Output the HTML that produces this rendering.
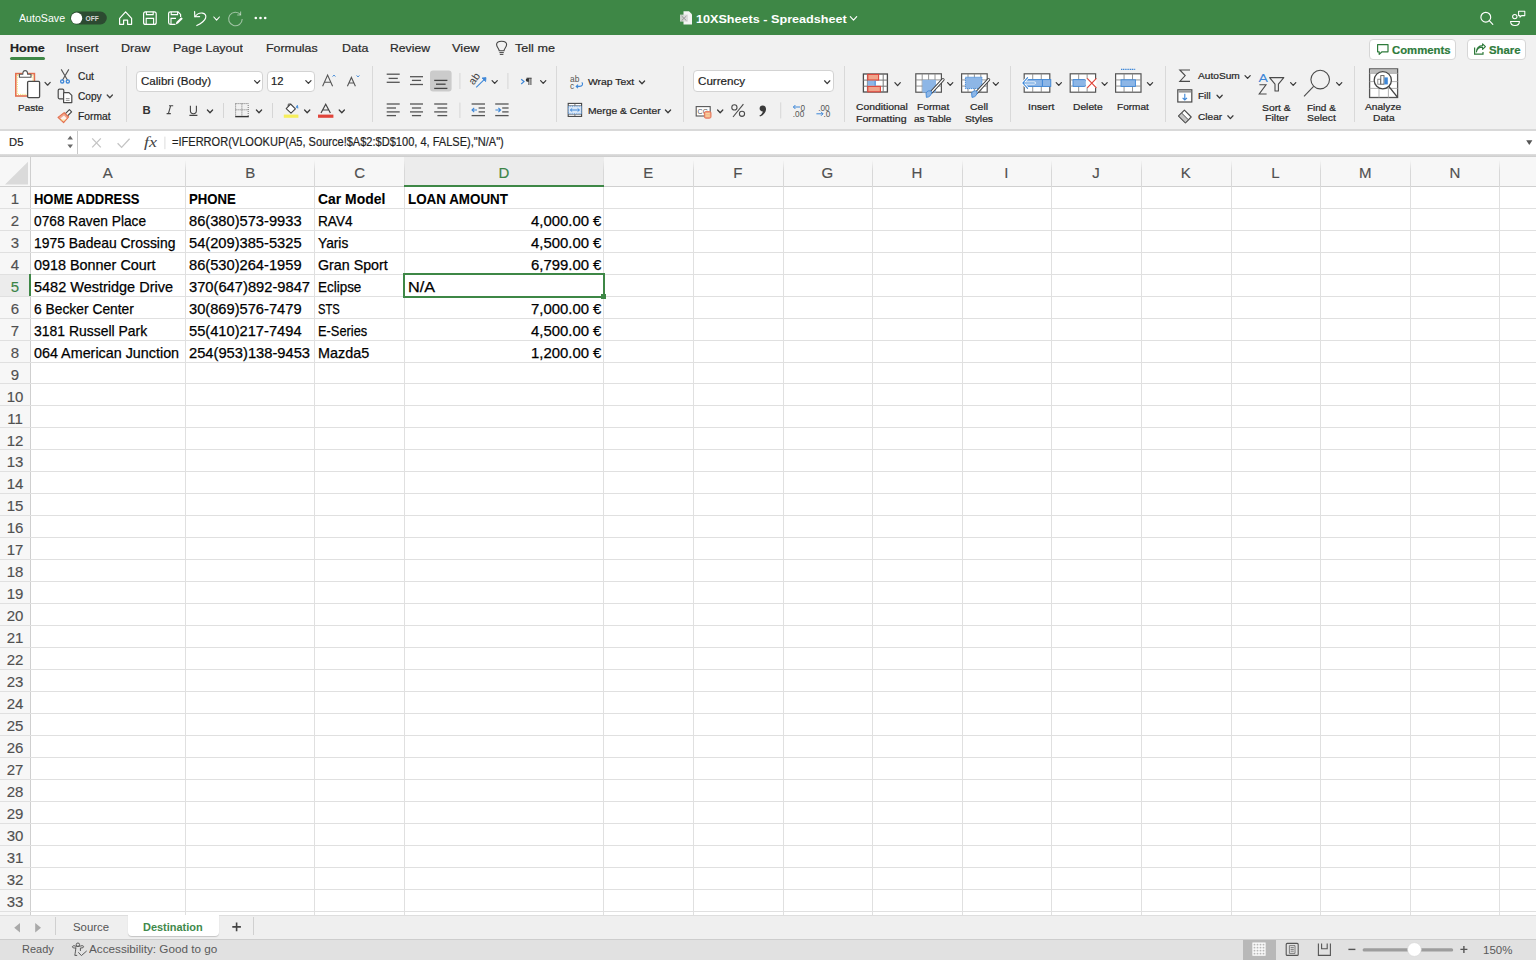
<!DOCTYPE html><html><head><meta charset='utf-8'><style>
*{box-sizing:border-box}
html,body{margin:0;padding:0}
body{width:1536px;height:960px;overflow:hidden;position:relative;background:#f1f1f1;font-family:'Liberation Sans',sans-serif}
.tx{position:absolute;white-space:pre;line-height:1;transform-origin:0 0}
.a{position:absolute}
svg{position:absolute;overflow:visible}
</style></head><body><div class="a" style="left:0px;top:0px;width:1536px;height:35px;background:#3e8746"></div><div class="a" style="left:0px;top:35px;width:1536px;height:94px;background:#f1f1f1"></div><div class="a" style="left:10px;top:57px;width:35px;height:3px;background:#3e8746;border-radius:2px"></div><div class="a" style="left:0px;top:129px;width:1536px;height:2px;background:#d9d9d9"></div><div class="a" style="left:1369px;top:39px;width:87px;height:21px;background:#fff;border:1px solid #d6d6d6;border-radius:4px"></div><div class="a" style="left:1467px;top:39px;width:59px;height:21px;background:#fff;border:1px solid #d6d6d6;border-radius:4px"></div><div class="a" style="left:126px;top:66px;width:1px;height:56px;background:#d9d9d9"></div><div class="a" style="left:372px;top:66px;width:1px;height:56px;background:#d9d9d9"></div><div class="a" style="left:556px;top:66px;width:1px;height:56px;background:#d9d9d9"></div><div class="a" style="left:683px;top:66px;width:1px;height:56px;background:#d9d9d9"></div><div class="a" style="left:844px;top:66px;width:1px;height:56px;background:#d9d9d9"></div><div class="a" style="left:1010px;top:66px;width:1px;height:56px;background:#d9d9d9"></div><div class="a" style="left:1165px;top:66px;width:1px;height:56px;background:#d9d9d9"></div><div class="a" style="left:1354px;top:66px;width:1px;height:56px;background:#d9d9d9"></div><div class="a" style="left:136px;top:71px;width:127px;height:21px;background:#fff;border:1px solid #d3d3d3;border-radius:4px"></div><div class="a" style="left:267px;top:71px;width:48px;height:21px;background:#fff;border:1px solid #d3d3d3;border-radius:4px"></div><div class="a" style="left:693px;top:70px;width:141px;height:22px;background:#fff;border:1px solid #d3d3d3;border-radius:4px"></div><div class="a" style="left:0px;top:131px;width:1536px;height:23px;background:#fff"></div><div class="a" style="left:77px;top:131px;width:1px;height:23px;background:#c9c9c9"></div><div class="a" style="left:0px;top:154px;width:1536px;height:3px;background:linear-gradient(#e0e0e0,#cccccc)"></div><div class="a" style="left:0px;top:157px;width:1536px;height:30px;background:#f7f7f7"></div><div class="a" style="left:404px;top:157px;width:200px;height:30px;background:#ececec"></div><div class="a" style="left:0px;top:186px;width:1536px;height:1px;background:#d0d0d0"></div><svg style="left:0px;top:157px;" width="30" height="30" viewBox="0 0 30 30"><path d="M5 27.6 L28 4.7 L28 27.6 Z" fill="#dadada"/></svg><div class="a" style="left:30px;top:157px;width:1px;height:758px;background:#cfcfcf"></div><div class="a" style="left:31px;top:187px;width:1505px;height:728px;background:#fff"></div><div class="a" style="left:0px;top:187px;width:30px;height:728px;background:#f7f7f7"></div><div class="a" style="left:0px;top:274px;width:30px;height:22px;background:#ececec"></div><div class="a" style="left:185px;top:160px;width:1px;height:27px;background:linear-gradient(rgba(216,216,216,0),#d8d8d8 40%)"></div><div class="a" style="left:185px;top:187px;width:1px;height:728px;background:#e0e0e0"></div><div class="a" style="left:314px;top:160px;width:1px;height:27px;background:linear-gradient(rgba(216,216,216,0),#d8d8d8 40%)"></div><div class="a" style="left:314px;top:187px;width:1px;height:728px;background:#e0e0e0"></div><div class="a" style="left:404px;top:160px;width:1px;height:27px;background:linear-gradient(rgba(216,216,216,0),#d8d8d8 40%)"></div><div class="a" style="left:404px;top:187px;width:1px;height:728px;background:#e0e0e0"></div><div class="a" style="left:603px;top:160px;width:1px;height:27px;background:linear-gradient(rgba(216,216,216,0),#d8d8d8 40%)"></div><div class="a" style="left:603px;top:187px;width:1px;height:728px;background:#e0e0e0"></div><div class="a" style="left:693px;top:160px;width:1px;height:27px;background:linear-gradient(rgba(216,216,216,0),#d8d8d8 40%)"></div><div class="a" style="left:693px;top:187px;width:1px;height:728px;background:#e0e0e0"></div><div class="a" style="left:783px;top:160px;width:1px;height:27px;background:linear-gradient(rgba(216,216,216,0),#d8d8d8 40%)"></div><div class="a" style="left:783px;top:187px;width:1px;height:728px;background:#e0e0e0"></div><div class="a" style="left:872px;top:160px;width:1px;height:27px;background:linear-gradient(rgba(216,216,216,0),#d8d8d8 40%)"></div><div class="a" style="left:872px;top:187px;width:1px;height:728px;background:#e0e0e0"></div><div class="a" style="left:962px;top:160px;width:1px;height:27px;background:linear-gradient(rgba(216,216,216,0),#d8d8d8 40%)"></div><div class="a" style="left:962px;top:187px;width:1px;height:728px;background:#e0e0e0"></div><div class="a" style="left:1051px;top:160px;width:1px;height:27px;background:linear-gradient(rgba(216,216,216,0),#d8d8d8 40%)"></div><div class="a" style="left:1051px;top:187px;width:1px;height:728px;background:#e0e0e0"></div><div class="a" style="left:1141px;top:160px;width:1px;height:27px;background:linear-gradient(rgba(216,216,216,0),#d8d8d8 40%)"></div><div class="a" style="left:1141px;top:187px;width:1px;height:728px;background:#e0e0e0"></div><div class="a" style="left:1231px;top:160px;width:1px;height:27px;background:linear-gradient(rgba(216,216,216,0),#d8d8d8 40%)"></div><div class="a" style="left:1231px;top:187px;width:1px;height:728px;background:#e0e0e0"></div><div class="a" style="left:1320px;top:160px;width:1px;height:27px;background:linear-gradient(rgba(216,216,216,0),#d8d8d8 40%)"></div><div class="a" style="left:1320px;top:187px;width:1px;height:728px;background:#e0e0e0"></div><div class="a" style="left:1410px;top:160px;width:1px;height:27px;background:linear-gradient(rgba(216,216,216,0),#d8d8d8 40%)"></div><div class="a" style="left:1410px;top:187px;width:1px;height:728px;background:#e0e0e0"></div><div class="a" style="left:1499px;top:160px;width:1px;height:27px;background:linear-gradient(rgba(216,216,216,0),#d8d8d8 40%)"></div><div class="a" style="left:1499px;top:187px;width:1px;height:728px;background:#e0e0e0"></div><div class="a" style="left:0px;top:208px;width:1536px;height:1px;background:#e0e0e0"></div><div class="a" style="left:0px;top:230px;width:1536px;height:1px;background:#e0e0e0"></div><div class="a" style="left:0px;top:252px;width:1536px;height:1px;background:#e0e0e0"></div><div class="a" style="left:0px;top:274px;width:1536px;height:1px;background:#e0e0e0"></div><div class="a" style="left:0px;top:296px;width:1536px;height:1px;background:#e0e0e0"></div><div class="a" style="left:0px;top:318px;width:1536px;height:1px;background:#e0e0e0"></div><div class="a" style="left:0px;top:340px;width:1536px;height:1px;background:#e0e0e0"></div><div class="a" style="left:0px;top:362px;width:1536px;height:1px;background:#e0e0e0"></div><div class="a" style="left:0px;top:383px;width:1536px;height:1px;background:#e0e0e0"></div><div class="a" style="left:0px;top:405px;width:1536px;height:1px;background:#e0e0e0"></div><div class="a" style="left:0px;top:427px;width:1536px;height:1px;background:#e0e0e0"></div><div class="a" style="left:0px;top:449px;width:1536px;height:1px;background:#e0e0e0"></div><div class="a" style="left:0px;top:471px;width:1536px;height:1px;background:#e0e0e0"></div><div class="a" style="left:0px;top:493px;width:1536px;height:1px;background:#e0e0e0"></div><div class="a" style="left:0px;top:515px;width:1536px;height:1px;background:#e0e0e0"></div><div class="a" style="left:0px;top:537px;width:1536px;height:1px;background:#e0e0e0"></div><div class="a" style="left:0px;top:559px;width:1536px;height:1px;background:#e0e0e0"></div><div class="a" style="left:0px;top:581px;width:1536px;height:1px;background:#e0e0e0"></div><div class="a" style="left:0px;top:603px;width:1536px;height:1px;background:#e0e0e0"></div><div class="a" style="left:0px;top:625px;width:1536px;height:1px;background:#e0e0e0"></div><div class="a" style="left:0px;top:647px;width:1536px;height:1px;background:#e0e0e0"></div><div class="a" style="left:0px;top:669px;width:1536px;height:1px;background:#e0e0e0"></div><div class="a" style="left:0px;top:691px;width:1536px;height:1px;background:#e0e0e0"></div><div class="a" style="left:0px;top:713px;width:1536px;height:1px;background:#e0e0e0"></div><div class="a" style="left:0px;top:735px;width:1536px;height:1px;background:#e0e0e0"></div><div class="a" style="left:0px;top:757px;width:1536px;height:1px;background:#e0e0e0"></div><div class="a" style="left:0px;top:779px;width:1536px;height:1px;background:#e0e0e0"></div><div class="a" style="left:0px;top:801px;width:1536px;height:1px;background:#e0e0e0"></div><div class="a" style="left:0px;top:823px;width:1536px;height:1px;background:#e0e0e0"></div><div class="a" style="left:0px;top:845px;width:1536px;height:1px;background:#e0e0e0"></div><div class="a" style="left:0px;top:867px;width:1536px;height:1px;background:#e0e0e0"></div><div class="a" style="left:0px;top:889px;width:1536px;height:1px;background:#e0e0e0"></div><div class="a" style="left:0px;top:911px;width:1536px;height:1px;background:#e0e0e0"></div><div class="a" style="left:404px;top:185px;width:200px;height:2px;background:#3e8746"></div><div class="a" style="left:29px;top:274px;width:2px;height:22px;background:#3e8746"></div><div class="a" style="left:403px;top:273px;width:202px;height:25px;border:2px solid #3e8746"></div><div class="a" style="left:601px;top:294px;width:5px;height:5px;background:#3e8746"></div><div class="a" style="left:0px;top:915px;width:1536px;height:24px;background:#efefef"></div><div class="a" style="left:0px;top:915px;width:1536px;height:1px;background:#dedede"></div><div class="a" style="left:55px;top:917px;width:1px;height:18px;background:#d0d0d0"></div><div class="a" style="left:253px;top:917px;width:1px;height:18px;background:#d0d0d0"></div><div class="a" style="left:128px;top:915px;width:91px;height:21px;background:#fff;border-radius:0 0 4px 4px;box-shadow:0 1px 1px rgba(0,0,0,.18)"></div><div class="a" style="left:0px;top:939px;width:1536px;height:21px;background:#e1e1e1"></div><div class="a" style="left:0px;top:939px;width:1536px;height:1px;background:#cdcdcd"></div><div class="a" style="left:1243px;top:940px;width:33px;height:20px;background:#b8b8b8"></div><svg style="left:0;top:0" width="1536" height="960" viewBox="0 0 1536 960"><rect x="70.3" y="11.5" width="36.5" height="13" rx="6.5" fill="#2c4a31"/><circle cx="76.6" cy="18.2" r="5.6" fill="#fff"/><text x="85.6" y="21.1" font-family="Liberation Sans" font-weight="700" font-size="7.2" fill="#d8d8d8" textLength="13.2" lengthAdjust="spacingAndGlyphs">OFF</text><path d="M119.6 18.3 L125.6 11.8 L131.6 18.3 V24.3 H127.6 V20.2 H123.6 V24.3 H119.6 Z" fill="none" stroke="#ffffff" stroke-width="1.2" stroke-linejoin="round"/><rect x="143.6" y="11.8" width="12.6" height="12.6" rx="2" fill="none" stroke="#ffffff" stroke-width="1.2"/><path d="M146.4 11.8 V14.6 H153.2 V11.8 M146.2 24.4 V18.4 H153.6 V24.4" fill="none" stroke="#ffffff" stroke-width="1.1"/><path d="M175.5 24.4 H170.4 Q168.6 24.4 168.6 22.6 V13.6 Q168.6 11.8 170.4 11.8 H178 L180.6 14.4 V17" fill="none" stroke="#ffffff" stroke-width="1.2"/><path d="M171.2 11.8 V14.6 H177.6 V11.8 M171 24.4 V18.4 H176" fill="none" stroke="#ffffff" stroke-width="1.1"/><path d="M175.8 24.6 L176.4 22 L181.2 17.2 L182.8 18.8 L178 23.6 Z" fill="#ffffff"/><path d="M195 16.6 C199 11.2 207.4 12.2 205.6 18 C204.6 21.2 200.8 23.6 196.8 25.6" fill="none" stroke="#ffffff" stroke-width="1.15" stroke-linecap="round"/><path d="M194.6 11.6 L194.8 16.8 L199.6 16.6" fill="none" stroke="#ffffff" stroke-width="1.15" stroke-linecap="round" stroke-linejoin="round"/><path d="M213.80 17.00 L216.60 20.20 L219.40 17.00" fill="none" stroke="#ffffff" stroke-width="1.1" stroke-linecap="round" stroke-linejoin="round"/><path d="M240.6 14.6 A6.8 6.8 0 1 0 242.2 19" fill="none" stroke="rgba(255,255,255,0.5)" stroke-width="1.1"/><path d="M240.6 11.4 V15 H237.2" fill="none" stroke="rgba(255,255,255,0.5)" stroke-width="1.1"/><circle cx="255.8" cy="18" r="1.3" fill="#ffffff"/><circle cx="260.5" cy="18" r="1.3" fill="#ffffff"/><circle cx="265.2" cy="18" r="1.3" fill="#ffffff"/><path d="M683.5 11.2 H689 L692 14.2 V24.6 H683.5 Z" fill="#f4f4f4"/><rect x="680" y="14.6" width="8" height="7" fill="#d9d9d9" opacity="0.9"/><path d="M681.6 16 L686.4 20.6 M686.4 16 L681.6 20.6" stroke="#9a9a9a" stroke-width="1"/><path d="M850.30 16.70 L853.50 20.10 L856.70 16.70" fill="none" stroke="#ffffff" stroke-width="1.2" stroke-linecap="round" stroke-linejoin="round"/><circle cx="1485.8" cy="17.2" r="4.9" fill="none" stroke="#ffffff" stroke-width="1.15"/><path d="M1489.3 20.7 L1492.8 24.4" stroke="#ffffff" stroke-width="1.2" stroke-linecap="round"/><circle cx="1514.8" cy="16.6" r="2.2" fill="none" stroke="#ffffff" stroke-width="1.05"/><path d="M1510.6 21.4 H1519.4 C1519.4 24 1517.6 25.4 1515 25.4 C1512.4 25.4 1510.6 24 1510.6 21.4 Z" fill="none" stroke="#ffffff" stroke-width="1.05"/><path d="M1518.6 11.2 H1524.8 V15.6 H1521.6 L1520 17.2 V15.6 H1518.6 Z" fill="none" stroke="#ffffff" stroke-width="1.05" stroke-linejoin="round"/><path d="M499.2 50.8 C499.2 48.4 496.6 47.4 496.6 44.6 C496.6 42.4 498.6 41.2 501.6 41.2 C504.6 41.2 506.6 42.4 506.6 44.6 C506.6 47.4 504 48.4 504 50.8 Z" fill="none" stroke="#444" stroke-width="1.1"/><path d="M499.4 52.6 H503.8 M499.8 54.4 H503.4" stroke="#444" stroke-width="1"/><path d="M1377.6 44.6 H1388 V51.8 H1382 L1379.2 54.4 V51.8 H1377.6 Z" fill="none" stroke="#2e7b3b" stroke-width="1.2" stroke-linejoin="round"/><path d="M1474.6 47.6 V54.2 H1483 V52" fill="none" stroke="#2e7b3b" stroke-width="1.2"/><path d="M1476.4 52 C1477 48.4 1479.6 47.2 1482.6 47.2 V49.4 L1485.4 46.6 L1482.6 43.8 V45.6 C1479 45.8 1476.6 48.2 1476.4 52 Z" fill="none" stroke="#2e7b3b" stroke-width="1.1" stroke-linejoin="round"/><rect x="15.8" y="73.6" width="18.6" height="22.4" fill="#fff" stroke="#e4704f" stroke-width="1.6"/><rect x="17.4" y="75.2" width="15.4" height="19.2" fill="none" stroke="#f3e14a" stroke-width="0.9" stroke-dasharray="1 1.2"/><path d="M19.4 77.2 V74.2 H22.8 C22.8 71.8 23.8 70.6 25.2 70.6 C26.6 70.6 27.6 71.8 27.6 74.2 H31 V77.2 Z" fill="#fff" stroke="#555" stroke-width="1.1" stroke-linejoin="round"/><rect x="27.6" y="81.4" width="12" height="16.2" rx="1" fill="#fff" stroke="#4a4a4a" stroke-width="1.3"/><path d="M45.00 82.40 L47.60 85.20 L50.20 82.40" fill="none" stroke="#454545" stroke-width="1.25" stroke-linecap="round" stroke-linejoin="round"/><path d="M61.2 69.4 L67.6 80.2 M68.8 69.4 L62.4 80.2" stroke="#555" stroke-width="1.1"/><circle cx="62.2" cy="81.4" r="1.6" fill="none" stroke="#3d87d8" stroke-width="1.3"/><circle cx="67.8" cy="81.4" r="1.6" fill="none" stroke="#3d87d8" stroke-width="1.3"/><path d="M64.4 98.8 H59.4 Q58.2 98.8 58.2 97.6 V90.4 Q58.2 89.2 59.4 89.2 H62.6 Q63.8 89.2 63.8 90.4 V92" fill="none" stroke="#4a4a4a" stroke-width="1.2"/><path d="M63.6 92.6 H69 L71.8 95.4 V102.6 H63.6 Z" fill="#fff" stroke="#4a4a4a" stroke-width="1.2" stroke-linejoin="round"/><path d="M65.8 98.6 H69.6 M65.8 100.4 H69.6" stroke="#777" stroke-width="0.8"/><path d="M107.20 95.00 L109.80 97.80 L112.40 95.00" fill="none" stroke="#454545" stroke-width="1.25" stroke-linecap="round" stroke-linejoin="round"/><path d="M65.2 113.8 L69.4 109.6 L71.6 111.8 L67.4 116" fill="#fff" stroke="#4a4a4a" stroke-width="1.2" stroke-linejoin="round"/><path d="M58 117.4 L64.2 112.6 L68.6 117 L63.6 122.6 Z" fill="#f0a48a" stroke="#e4704f" stroke-width="1.1" stroke-linejoin="round"/><path d="M60.4 118.4 L64 115.6 L66.6 118.2 L63.6 121.2 Z" fill="#fff" opacity="0.85"/><path d="M61.4 120 H65.6" stroke="#f3e14a" stroke-width="1" stroke-dasharray="1 1"/><path d="M254.60 80.60 L257.20 83.40 L259.80 80.60" fill="none" stroke="#3a3a3a" stroke-width="1.25" stroke-linecap="round" stroke-linejoin="round"/><path d="M305.80 80.60 L308.40 83.40 L311.00 80.60" fill="none" stroke="#3a3a3a" stroke-width="1.25" stroke-linecap="round" stroke-linejoin="round"/><path d="M322.6 86.2 L327.6 75 L332.6 86.2 M324.4 82.2 H330.8" fill="none" stroke="#555" stroke-width="1.1"/><path d="M332.6 76.6 L334 75 L335.4 76.6" fill="none" stroke="#3d87d8" stroke-width="0.9"/><path d="M347.4 86.2 L351.4 77.4 L355.4 86.2 M348.8 83 H354" fill="none" stroke="#555" stroke-width="1.1"/><path d="M356.6 75.4 L358 77 L359.4 75.4" fill="none" stroke="#3d87d8" stroke-width="0.9"/><text x="142.6" y="113.8" font-family="Liberation Sans" font-weight="700" font-size="11.4" fill="#333">B</text><path d="M170.6 105.8 L168.4 113.6 M169 105.8 H173.2 M166.6 113.6 H170.8" stroke="#444" stroke-width="1.1"/><path d="M190.4 105.8 V110.6 C190.4 112.8 191.6 113.8 193.4 113.8 C195.2 113.8 196.4 112.8 196.4 110.6 V105.8 M189.4 115.4 H197.4" fill="none" stroke="#444" stroke-width="1.1"/><path d="M207.40 110.00 L210.00 112.80 L212.60 110.00" fill="none" stroke="#3a3a3a" stroke-width="1.25" stroke-linecap="round" stroke-linejoin="round"/><rect x="223" y="103" width="1" height="15" fill="#d6d6d6"/><path d="M235.6 103.6 H248.2 V116 M235.6 103.6 V116 M241.9 103.6 V116 M235.6 109.8 H248.2" fill="none" stroke="#666" stroke-width="0.9" stroke-dasharray="1 1"/><path d="M235.2 116.6 H248.8" stroke="#333" stroke-width="1.4"/><path d="M256.40 110.00 L259.00 112.80 L261.60 110.00" fill="none" stroke="#3a3a3a" stroke-width="1.25" stroke-linecap="round" stroke-linejoin="round"/><rect x="272" y="103" width="1" height="15" fill="#d6d6d6"/><path d="M286.2 108.6 L290.6 104 L295.4 108.8 L291 113.2 Z" fill="#fff" stroke="#444" stroke-width="1.1" stroke-linejoin="round"/><path d="M288.4 106.2 C287.6 104.6 288.6 103.4 289.6 103.8" fill="none" stroke="#444" stroke-width="1"/><path d="M296 107.4 L297.4 105.2 L298 108.4" fill="#3d87d8" stroke="#3d87d8" stroke-width="0.7"/><rect x="283.8" y="114.6" width="14.6" height="3.2" fill="#f6ee5a"/><path d="M304.60 110.00 L307.20 112.80 L309.80 110.00" fill="none" stroke="#3a3a3a" stroke-width="1.25" stroke-linecap="round" stroke-linejoin="round"/><path d="M321 113 L325.7 104.2 L330.4 113 M322.7 110 H328.7" fill="none" stroke="#444" stroke-width="1.2"/><rect x="318" y="114.6" width="15.4" height="3.2" fill="#e0453b"/><path d="M339.20 110.00 L341.80 112.80 L344.40 110.00" fill="none" stroke="#3a3a3a" stroke-width="1.25" stroke-linecap="round" stroke-linejoin="round"/><path d="M386.7 74.2 H399.7" stroke="#555" stroke-width="1.3"/><path d="M388.6 78.4 H397.8" stroke="#555" stroke-width="1.3"/><path d="M386.7 82.3 H399.7" stroke="#555" stroke-width="1.3"/><path d="M410 76.7 H423" stroke="#555" stroke-width="1.3"/><path d="M411.9 80.4 H421.1" stroke="#555" stroke-width="1.3"/><path d="M410 84.5 H423" stroke="#555" stroke-width="1.3"/><rect x="430" y="70.6" width="21.6" height="21" rx="3" fill="#cbcbcb"/><path d="M434.2 80.4 H447.4" stroke="#444" stroke-width="1.3"/><path d="M436 84.2 H445.6" stroke="#444" stroke-width="1.3"/><path d="M434.2 88.4 H447.4" stroke="#444" stroke-width="1.3"/><rect x="459.4" y="73" width="1" height="16" fill="#d6d6d6"/><text x="0" y="0" font-family="Liberation Sans" font-size="10.6" fill="#444" transform="translate(473.8 85.6) rotate(-55)">ab</text><path d="M476.2 87.4 L485.2 78.6" fill="none" stroke="#3d87d8" stroke-width="1.1"/><path d="M482 78 L486 77.6 L485.6 81.6 Z" fill="#3d87d8" stroke="#3d87d8" stroke-width="0.8" stroke-linejoin="round"/><path d="M492.10 80.60 L494.70 83.40 L497.30 80.60" fill="none" stroke="#3a3a3a" stroke-width="1.25" stroke-linecap="round" stroke-linejoin="round"/><rect x="507.4" y="73" width="1" height="16" fill="#d6d6d6"/><path d="M521.2 79.2 L524 81.6 L521.2 84" fill="none" stroke="#3d87d8" stroke-width="1.2"/><path d="M528.9 78.2 V85 M530.9 78.2 V85 M526.6 78.2 H531.6" fill="none" stroke="#333" stroke-width="0.9"/><path d="M528.9 78.2 H527.8 C526.6 78.2 525.8 79 525.8 80 C525.8 81 526.6 81.8 527.8 81.8 H528.9 Z" fill="#333"/><path d="M540.60 80.60 L543.20 83.40 L545.80 80.60" fill="none" stroke="#3a3a3a" stroke-width="1.25" stroke-linecap="round" stroke-linejoin="round"/><path d="M386.7 104 H399.7" stroke="#555" stroke-width="1.3"/><path d="M386.7 108 H396" stroke="#555" stroke-width="1.3"/><path d="M386.7 111.9 H399.7" stroke="#555" stroke-width="1.3"/><path d="M386.7 115.6 H396" stroke="#555" stroke-width="1.3"/><path d="M410 104 H423" stroke="#555" stroke-width="1.3"/><path d="M411.9 108 H421.1" stroke="#555" stroke-width="1.3"/><path d="M410 111.9 H423" stroke="#555" stroke-width="1.3"/><path d="M411.9 115.6 H421.1" stroke="#555" stroke-width="1.3"/><path d="M434.2 104 H447.2" stroke="#555" stroke-width="1.3"/><path d="M437.4 108 H447.2" stroke="#555" stroke-width="1.3"/><path d="M434.2 111.9 H447.2" stroke="#555" stroke-width="1.3"/><path d="M437.4 115.6 H447.2" stroke="#555" stroke-width="1.3"/><rect x="459.4" y="102.6" width="1" height="15.4" fill="#d6d6d6"/><path d="M471.6 104 H485" stroke="#555" stroke-width="1.3"/><path d="M478.6 108 H485" stroke="#555" stroke-width="1.3"/><path d="M478.6 111.9 H485" stroke="#555" stroke-width="1.3"/><path d="M471.6 115.6 H485" stroke="#555" stroke-width="1.3"/><path d="M477 110 H472 M474.2 107.8 L472 110 L474.2 112.2" fill="none" stroke="#3d87d8" stroke-width="1.1"/><path d="M495.2 104 H508.6" stroke="#555" stroke-width="1.3"/><path d="M502.2 108 H508.6" stroke="#555" stroke-width="1.3"/><path d="M502.2 111.9 H508.6" stroke="#555" stroke-width="1.3"/><path d="M495.2 115.6 H508.6" stroke="#555" stroke-width="1.3"/><path d="M495.4 110 H500.6 M498.4 107.8 L500.6 110 L498.4 112.2" fill="none" stroke="#3d87d8" stroke-width="1.1"/><text x="570" y="82" font-family="Liberation Sans" font-size="8.4" fill="#555">ab</text><text x="570" y="88.6" font-family="Liberation Sans" font-size="8.4" fill="#555">c</text><path d="M581.8 82.4 C583.4 84 582.4 86.4 579.6 86.4 H576.2 M578 84.6 L576.2 86.4 L578 88.2" fill="none" stroke="#3d87d8" stroke-width="1.1"/><path d="M639.40 81.00 L642.00 83.80 L644.60 81.00" fill="none" stroke="#3a3a3a" stroke-width="1.25" stroke-linecap="round" stroke-linejoin="round"/><rect x="568.2" y="103.4" width="13.4" height="13" fill="#fff" stroke="#444" stroke-width="1.1"/><path d="M574.9 103.4 V105.6 M574.9 114.4 V116.4 M568.2 105.8 H581.6 M568.2 114.2 H581.6" stroke="#555" stroke-width="0.8"/><rect x="568.4" y="106.2" width="13" height="7.6" fill="#dbe8f7" stroke="#3d87d8" stroke-width="0.8" stroke-dasharray="1 0.8"/><path d="M570.4 110 H579.4 M572.2 108.4 L570.4 110 L572.2 111.6 M577.6 108.4 L579.4 110 L577.6 111.6" fill="none" stroke="#3d87d8" stroke-width="1"/><path d="M665.40 110.00 L668.00 112.80 L670.60 110.00" fill="none" stroke="#3a3a3a" stroke-width="1.25" stroke-linecap="round" stroke-linejoin="round"/><path d="M824.60 80.80 L827.20 83.60 L829.80 80.80" fill="none" stroke="#3a3a3a" stroke-width="1.25" stroke-linecap="round" stroke-linejoin="round"/><rect x="696.2" y="106.6" width="14" height="9.4" fill="#fff" stroke="#555" stroke-width="1.1"/><text x="697.6" y="114.2" font-family="Liberation Sans" font-size="7" fill="#555">CC</text><rect x="704.4" y="111.6" width="6.6" height="6.6" rx="1.4" fill="#f0a48a" stroke="#e4704f" stroke-width="0.9"/><path d="M705.6 113.8 H709.8 M705.6 116 H709.8" stroke="#fff4a0" stroke-width="0.9"/><path d="M717.60 110.00 L720.20 112.80 L722.80 110.00" fill="none" stroke="#3a3a3a" stroke-width="1.25" stroke-linecap="round" stroke-linejoin="round"/><circle cx="734.4" cy="107.4" r="2.6" fill="none" stroke="#4a4a4a" stroke-width="1.1"/><circle cx="742" cy="113.8" r="2.6" fill="none" stroke="#4a4a4a" stroke-width="1.1"/><path d="M743.4 104.2 L733 117" stroke="#4a4a4a" stroke-width="1.1"/><path d="M762.6 105.4 C765.2 105.4 766.2 107.4 766 109.6 C765.8 112.6 763.6 115 760 116.4 L759.4 115.6 C761.8 114.2 762.6 112.8 762.8 111.4 C761 111.2 759.6 110.2 759.6 108.4 C759.6 106.6 760.8 105.4 762.6 105.4 Z" fill="#3a3a3a"/><rect x="780.2" y="102.4" width="1" height="16" fill="#d6d6d6"/><text x="800.4" y="110.6" font-family="Liberation Sans" font-size="8.2" fill="#555">0</text><text x="792.8" y="117.4" font-family="Liberation Sans" font-size="8.2" fill="#555">.00</text><path d="M800 107 H793.4 M795.4 105 L793.4 107 L795.4 109" fill="none" stroke="#3d87d8" stroke-width="1"/><text x="818.2" y="110.6" font-family="Liberation Sans" font-size="8.2" fill="#555">.00</text><text x="823.6" y="117.4" font-family="Liberation Sans" font-size="8.2" fill="#555">.0</text><path d="M816.4 113.8 H823 M821 111.8 L823 113.8 L821 115.8" fill="none" stroke="#3d87d8" stroke-width="1"/><rect x="863.4" y="74" width="24" height="18" fill="#fff" stroke="#4a4a4a" stroke-width="1.3"/><path d="M867.4 74 V92 M883.2 74 V92 M863.4 80.1 H887.4 M863.4 86.2 H887.4" stroke="#777" stroke-width="1"/><rect x="867.8" y="74.4" width="10.8" height="5.6" fill="#f0a48a" stroke="#e0453b" stroke-width="1.1"/><rect x="867.6" y="80.8" width="7.8" height="5" fill="#8db6e6"/><path d="M875.2 80.8 V85.8" stroke="#3d87d8" stroke-width="1"/><rect x="867.8" y="86.4" width="12.6" height="5.4" fill="#f0a48a" stroke="#e0453b" stroke-width="1.1"/><path d="M894.90 82.70 L897.60 85.70 L900.30 82.70" fill="none" stroke="#3a3a3a" stroke-width="1.25" stroke-linecap="round" stroke-linejoin="round"/><rect x="915.8" y="73.8" width="25.600000000000023" height="18.400000000000006" fill="#fff" stroke="#555" stroke-width="1.2"/><path d="M922.20 73.8 V92.2" stroke="#888" stroke-width="0.9"/><path d="M928.60 73.8 V92.2" stroke="#888" stroke-width="0.9"/><path d="M935.00 73.8 V92.2" stroke="#888" stroke-width="0.9"/><path d="M915.8 79.93 H941.4" stroke="#888" stroke-width="0.9"/><path d="M915.8 86.07 H941.4" stroke="#888" stroke-width="0.9"/><rect x="922.4" y="79.8" width="13.6" height="12.8" fill="#8db6e6"/><path d="M943 79.6 L931.2 92.4" stroke="#444" stroke-width="3.2" stroke-linecap="round"/><path d="M943 79.6 L931.2 92.4" stroke="#fff" stroke-width="1.4" stroke-linecap="round"/><path d="M926 93 C927.4 90.6 929.6 90.2 931.6 91.6 C931.8 94.6 929.8 97.2 926.4 97.4 Z" fill="#8db6e6" stroke="#3d87d8" stroke-width="0.9"/><path d="M947.60 82.60 L950.20 85.40 L952.80 82.60" fill="none" stroke="#3a3a3a" stroke-width="1.25" stroke-linecap="round" stroke-linejoin="round"/><rect x="961.6" y="73.8" width="25.600000000000023" height="18.400000000000006" fill="#fff" stroke="#555" stroke-width="1.2"/><path d="M968.00 73.8 V92.2" stroke="#888" stroke-width="0.9"/><path d="M974.40 73.8 V92.2" stroke="#888" stroke-width="0.9"/><path d="M980.80 73.8 V92.2" stroke="#888" stroke-width="0.9"/><path d="M961.6 79.93 H987.2" stroke="#888" stroke-width="0.9"/><path d="M961.6 86.07 H987.2" stroke="#888" stroke-width="0.9"/><rect x="965.4" y="77.2" width="16.6" height="11.4" fill="#8db6e6" stroke="#3d87d8" stroke-width="0.9" stroke-dasharray="1.2 0.8"/><path d="M988.6 79.6 L976.8 92.4" stroke="#444" stroke-width="3.2" stroke-linecap="round"/><path d="M988.6 79.6 L976.8 92.4" stroke="#fff" stroke-width="1.4" stroke-linecap="round"/><path d="M971.6 93 C973 90.6 975.2 90.2 977.2 91.6 C977.4 94.6 975.4 97.2 972 97.4 Z" fill="#8db6e6" stroke="#3d87d8" stroke-width="0.9"/><path d="M993.20 82.60 L995.80 85.40 L998.40 82.60" fill="none" stroke="#3a3a3a" stroke-width="1.25" stroke-linecap="round" stroke-linejoin="round"/><rect x="1024.2" y="73.8" width="25.59999999999991" height="18.400000000000006" fill="#fff" stroke="#555" stroke-width="1.2"/><path d="M1032.73 73.8 V92.2" stroke="#888" stroke-width="0.9"/><path d="M1041.27 73.8 V92.2" stroke="#888" stroke-width="0.9"/><path d="M1024.2 79.93 H1049.8" stroke="#888" stroke-width="0.9"/><path d="M1024.2 86.07 H1049.8" stroke="#888" stroke-width="0.9"/><rect x="1026" y="79.6" width="24.8" height="6.8" fill="#8db6e6" stroke="#3d87d8" stroke-width="0.9"/><path d="M1034.4 83 H1023 M1027.6 77.6 L1022.8 83 L1027.6 88.4" fill="none" stroke="#fff" stroke-width="2.8" stroke-linecap="round" stroke-linejoin="round"/><path d="M1034.4 83 H1023 M1027.6 77.6 L1022.8 83 L1027.6 88.4" fill="none" stroke="#3d87d8" stroke-width="1.1" stroke-linecap="round" stroke-linejoin="round"/><path d="M1042.4 79.8 V86.2" stroke="#3d87d8" stroke-width="1"/><path d="M1056.20 82.60 L1058.80 85.40 L1061.40 82.60" fill="none" stroke="#3a3a3a" stroke-width="1.25" stroke-linecap="round" stroke-linejoin="round"/><rect x="1070.2" y="73.8" width="25.399999999999864" height="18.400000000000006" fill="#fff" stroke="#555" stroke-width="1.2"/><path d="M1078.67 73.8 V92.2" stroke="#888" stroke-width="0.9"/><path d="M1087.13 73.8 V92.2" stroke="#888" stroke-width="0.9"/><path d="M1070.2 79.93 H1095.6" stroke="#888" stroke-width="0.9"/><path d="M1070.2 86.07 H1095.6" stroke="#888" stroke-width="0.9"/><path d="M1073 79.6 H1084.6 L1087.8 83 L1084.6 86.4 H1073 Z" fill="#8db6e6" stroke="#3d87d8" stroke-width="0.9"/><rect x="1085.8" y="79" width="11" height="8.6" fill="#fff"/><path d="M1087.2 78.4 L1096.4 87.8 M1096.4 78.4 L1087.2 87.8" stroke="#e0453b" stroke-width="1.2"/><path d="M1102.00 82.60 L1104.60 85.40 L1107.20 82.60" fill="none" stroke="#3a3a3a" stroke-width="1.25" stroke-linecap="round" stroke-linejoin="round"/><rect x="1115.6" y="73.8" width="25.40000000000009" height="18.400000000000006" fill="#fff" stroke="#555" stroke-width="1.2"/><path d="M1124.07 73.8 V92.2" stroke="#888" stroke-width="0.9"/><path d="M1132.53 73.8 V92.2" stroke="#888" stroke-width="0.9"/><path d="M1115.6 79.93 H1141" stroke="#888" stroke-width="0.9"/><path d="M1115.6 86.07 H1141" stroke="#888" stroke-width="0.9"/><rect x="1121" y="79.8" width="14.4" height="6.6" fill="#8db6e6" stroke="#3d87d8" stroke-width="0.9"/><path d="M1121 69.4 H1135.6" stroke="#3d87d8" stroke-width="1.4" stroke-dasharray="1.2 0.6"/><path d="M1147.40 82.60 L1150.00 85.40 L1152.60 82.60" fill="none" stroke="#3a3a3a" stroke-width="1.25" stroke-linecap="round" stroke-linejoin="round"/><path d="M1190 70 H1179.8 L1185.2 75.6 L1179.8 81.4 H1190" fill="none" stroke="#4a4a4a" stroke-width="1.1" stroke-linejoin="miter"/><path d="M1245.00 75.60 L1247.60 78.40 L1250.20 75.60" fill="none" stroke="#3a3a3a" stroke-width="1.25" stroke-linecap="round" stroke-linejoin="round"/><rect x="1177.8" y="89.8" width="14" height="12.2" fill="#fff" stroke="#4a4a4a" stroke-width="1.2"/><rect x="1178.4" y="90.4" width="12.8" height="2.2" fill="#999"/><path d="M1184.8 93.8 V100 M1182.6 97.8 L1184.8 100 L1187 97.8" fill="none" stroke="#3d87d8" stroke-width="1.1"/><path d="M1217.00 95.20 L1219.60 98.00 L1222.20 95.20" fill="none" stroke="#3a3a3a" stroke-width="1.25" stroke-linecap="round" stroke-linejoin="round"/><path d="M1178.6 116 L1184.4 110.2 L1191.2 117 L1185.4 122.8 Z" fill="#fff" stroke="#4a4a4a" stroke-width="1.1" stroke-linejoin="round"/><path d="M1178.6 116 L1181.6 113 L1188.4 119.8 L1185.4 122.8 Z" fill="#c4c4c4" stroke="#555" stroke-width="1" stroke-linejoin="round"/><path d="M1227.80 115.80 L1230.40 118.60 L1233.00 115.80" fill="none" stroke="#3a3a3a" stroke-width="1.25" stroke-linecap="round" stroke-linejoin="round"/><text x="1258.4" y="81.6" font-family="Liberation Sans" font-size="11.6" fill="#3d87d8" textLength="9.4" lengthAdjust="spacingAndGlyphs">A</text><path d="M1259.4 84.8 H1266 L1259.2 94 H1266.6" fill="none" stroke="#4a4a4a" stroke-width="1.1"/><path d="M1269.6 77.6 H1283.8 L1278.4 84.2 V91 H1275 V84.2 Z" fill="none" stroke="#4a4a4a" stroke-width="1.1" stroke-linejoin="round"/><path d="M1290.60 82.60 L1293.20 85.40 L1295.80 82.60" fill="none" stroke="#3a3a3a" stroke-width="1.25" stroke-linecap="round" stroke-linejoin="round"/><circle cx="1320.2" cy="79.6" r="9.3" fill="none" stroke="#4a4a4a" stroke-width="1.1"/><path d="M1313.6 86.4 L1304 96.4" stroke="#4a4a4a" stroke-width="1.1"/><path d="M1336.60 82.60 L1339.20 85.40 L1341.80 82.60" fill="none" stroke="#3a3a3a" stroke-width="1.25" stroke-linecap="round" stroke-linejoin="round"/><rect x="1369.6" y="68.9" width="28" height="28.6" fill="#fff" stroke="#555" stroke-width="1.3"/><rect x="1370.2" y="69.6" width="26.8" height="3.4" fill="#bdbdbd"/><path d="M1369.6 73.4 H1397.6 M1369.6 81.6 H1397.6 M1369.6 88.4 H1397.6 M1379 88.4 V97.5 M1388.4 88.4 V97.5" stroke="#aaa" stroke-width="0.9"/><circle cx="1382.8" cy="80.2" r="8.6" fill="#fff" stroke="#444" stroke-width="1.3"/><path d="M1388.8 86.4 L1397.6 97.4" stroke="#444" stroke-width="1.4"/><rect x="1377.8" y="79.2" width="2.8" height="5" fill="#fff" stroke="#777" stroke-width="0.8"/><rect x="1380.8" y="75.6" width="3.2" height="8.6" fill="#fff" stroke="#555" stroke-width="0.9"/><rect x="1384.4" y="77.4" width="3.4" height="7" fill="#3d87d8"/><path d="M67.4 139.4 L70.2 135.8 L73 139.4 Z M67.4 144.6 L70.2 148.2 L73 144.6 Z" fill="#6a6a6a"/><path d="M92.2 138.4 L100.8 147.4 M100.8 138.4 L92.2 147.4" stroke="#c4c4c4" stroke-width="1.3"/><path d="M117.6 143.2 L121.6 147.4 L129.6 138.8" fill="none" stroke="#c4c4c4" stroke-width="1.3"/><text x="144" y="147.4" font-family="Liberation Serif" font-style="italic" font-size="15" fill="#444" textLength="13" lengthAdjust="spacingAndGlyphs">fx</text><rect x="164.4" y="136.6" width="1" height="12.6" fill="#dcdcdc"/><path d="M1526.2 140.2 H1532.4 L1529.3 145 Z" fill="#555"/><path d="M20 923 V932.4 L14.2 927.7 Z M35.2 923 V932.4 L41 927.7 Z" fill="#a9a9a9"/><path d="M236.6 922.6 V931.2 M232.3 926.9 H240.9" stroke="#444" stroke-width="1.6"/><circle cx="77.9" cy="944.7" r="1.7" fill="none" stroke="#5a5a5a" stroke-width="1"/><path d="M75.8 948 C73.4 948.2 72.2 947.6 72.4 946.6 C72.8 945.4 74.6 945.6 76.2 946.4 H79.6 C81.2 945.6 83.2 945.4 83.6 946.4 C84 947.4 83 948 80.4 948 V950.6 M75.8 948 C75.6 951 75.2 953 74.8 955.4 H76.8" fill="none" stroke="#5a5a5a" stroke-width="1" stroke-linejoin="round" stroke-linecap="round"/><path d="M78.6 952.6 L81.4 955.6 L86.4 951.2" fill="none" stroke="#5a5a5a" stroke-width="1" stroke-linecap="round"/><path d="M1253 943.2 H1265 V955.2 H1253 Z M1256 943.2 V955.2 M1259 943.2 V955.2 M1262 943.2 V955.2 M1253 946.2 H1265 M1253 949.2 H1265 M1253 952.2 H1265" fill="none" stroke="#fff" stroke-width="1.2"/><rect x="1286.2" y="943.4" width="12" height="12" rx="1" fill="none" stroke="#555" stroke-width="1.1"/><path d="M1289.4 945.6 H1295 V953.4 H1289.4 Z M1290.6 947.6 H1293.8 M1290.6 949.4 H1293.8 M1290.6 951.2 H1293.8" fill="none" stroke="#666" stroke-width="0.8"/><path d="M1318.4 943.4 V955.4 H1330.4 V943.4 M1321.6 943.4 V948.8 H1327.2 V943.4" fill="none" stroke="#555" stroke-width="1.1"/><path d="M1348.4 949.4 H1355.4" stroke="#555" stroke-width="1.4"/><rect x="1362.6" y="948.2" width="90.6" height="3.4" rx="1.7" fill="#9d9d9d"/><circle cx="1414.4" cy="949.5" r="6.9" fill="#fff" stroke="#d0d0d0" stroke-width="0.6"/><path d="M1460.4 949.4 H1467.4 M1463.9 945.9 V952.9" stroke="#555" stroke-width="1.4"/></svg><span class="tx" id="t0" style="left:19.12px;top:14.06px;font-size:10.4px;color:#ffffff;transform:scaleX(1.0216);">AutoSave</span><span class="tx" id="t1" style="left:696.13px;top:13.98px;font-size:11.32px;color:#ffffff;font-weight:700;transform:scaleX(1.1149);">10XSheets - Spreadsheet</span><span class="tx" id="t2" style="left:9.94px;top:43.22px;font-size:11.04px;color:#1f1f1f;font-weight:700;transform:scaleX(1.1317);-webkit-text-stroke:0.2px currentColor;">Home</span><span class="tx" id="t3" style="left:65.91px;top:43.22px;font-size:11.04px;color:#2b2b2b;transform:scaleX(1.1776);-webkit-text-stroke:0.2px currentColor;">Insert</span><span class="tx" id="t4" style="left:121.43px;top:43.22px;font-size:11.04px;color:#2b2b2b;transform:scaleX(1.1376);-webkit-text-stroke:0.2px currentColor;">Draw</span><span class="tx" id="t5" style="left:172.94px;top:43.22px;font-size:11.04px;color:#2b2b2b;transform:scaleX(1.1282);-webkit-text-stroke:0.2px currentColor;">Page Layout</span><span class="tx" id="t6" style="left:266.44px;top:43.22px;font-size:11.04px;color:#2b2b2b;transform:scaleX(1.1242);-webkit-text-stroke:0.2px currentColor;">Formulas</span><span class="tx" id="t7" style="left:341.74px;top:43.22px;font-size:11.04px;color:#2b2b2b;transform:scaleX(1.1322);-webkit-text-stroke:0.2px currentColor;">Data</span><span class="tx" id="t8" style="left:389.95px;top:43.22px;font-size:11.04px;color:#2b2b2b;transform:scaleX(1.1057);-webkit-text-stroke:0.2px currentColor;">Review</span><span class="tx" id="t9" style="left:451.82px;top:43.22px;font-size:11.04px;color:#2b2b2b;transform:scaleX(1.1634);-webkit-text-stroke:0.2px currentColor;">View</span><span class="tx" id="t10" style="left:514.93px;top:43.22px;font-size:11.04px;color:#2b2b2b;transform:scaleX(1.1413);-webkit-text-stroke:0.2px currentColor;">Tell me</span><span class="tx" id="t11" style="left:1392.49px;top:44.57px;font-size:10.86px;color:#2e7b3b;font-weight:700;transform:scaleX(1.0437);-webkit-text-stroke:0.2px currentColor;">Comments</span><span class="tx" id="t12" style="left:1489.49px;top:44.57px;font-size:10.86px;color:#2e7b3b;font-weight:700;transform:scaleX(1.0427);-webkit-text-stroke:0.2px currentColor;">Share</span><span class="tx" id="t13" style="left:18.15px;top:102.91px;font-size:9.75px;color:#262626;transform:scaleX(1.0217);-webkit-text-stroke:0.2px currentColor;">Paste</span><span class="tx" id="t14" style="left:77.54px;top:71.87px;font-size:10.03px;color:#262626;transform:scaleX(1.0198);-webkit-text-stroke:0.2px currentColor;">Cut</span><span class="tx" id="t15" style="left:77.54px;top:91.87px;font-size:10.03px;color:#262626;transform:scaleX(1.0133);-webkit-text-stroke:0.2px currentColor;">Copy</span><span class="tx" id="t16" style="left:77.54px;top:111.87px;font-size:10.03px;color:#262626;transform:scaleX(1.0274);-webkit-text-stroke:0.2px currentColor;">Format</span><span class="tx" id="t17" style="left:140.78px;top:75.81px;font-size:10.58px;color:#1f1f1f;transform:scaleX(1.0932);-webkit-text-stroke:0.2px currentColor;">Calibri (Body)</span><span class="tx" id="t18" style="left:271.00px;top:75.81px;font-size:10.58px;color:#1f1f1f;transform:scaleX(1.0570);-webkit-text-stroke:0.2px currentColor;">12</span><span class="tx" id="t19" style="left:587.73px;top:77.78px;font-size:9.2px;color:#262626;transform:scaleX(1.1267);-webkit-text-stroke:0.2px currentColor;">Wrap Text</span><span class="tx" id="t20" style="left:587.74px;top:106.78px;font-size:9.2px;color:#262626;transform:scaleX(1.1198);-webkit-text-stroke:0.2px currentColor;">Merge &amp; Center</span><span class="tx" id="t21" style="left:697.88px;top:76.01px;font-size:10.58px;color:#1f1f1f;transform:scaleX(1.0986);-webkit-text-stroke:0.2px currentColor;">Currency</span><span class="tx" id="t22" style="left:855.53px;top:103.28px;font-size:9.2px;color:#262626;transform:scaleX(1.1271);-webkit-text-stroke:0.2px currentColor;">Conditional</span><span class="tx" id="t23" style="left:856.12px;top:114.78px;font-size:9.2px;color:#262626;transform:scaleX(1.1527);-webkit-text-stroke:0.2px currentColor;">Formatting</span><span class="tx" id="t24" style="left:917.04px;top:103.28px;font-size:9.2px;color:#262626;transform:scaleX(1.1106);-webkit-text-stroke:0.2px currentColor;">Format</span><span class="tx" id="t25" style="left:914.25px;top:114.78px;font-size:9.2px;color:#262626;transform:scaleX(1.0959);-webkit-text-stroke:0.2px currentColor;">as Table</span><span class="tx" id="t26" style="left:969.53px;top:103.28px;font-size:9.2px;color:#262626;transform:scaleX(1.1390);-webkit-text-stroke:0.2px currentColor;">Cell</span><span class="tx" id="t27" style="left:964.54px;top:114.78px;font-size:9.2px;color:#262626;transform:scaleX(1.1197);-webkit-text-stroke:0.2px currentColor;">Styles</span><span class="tx" id="t28" style="left:1028.33px;top:103.48px;font-size:9.2px;color:#262626;transform:scaleX(1.1455);-webkit-text-stroke:0.2px currentColor;">Insert</span><span class="tx" id="t29" style="left:1072.54px;top:103.48px;font-size:9.2px;color:#262626;transform:scaleX(1.1154);-webkit-text-stroke:0.2px currentColor;">Delete</span><span class="tx" id="t30" style="left:1117.45px;top:103.48px;font-size:9.2px;color:#262626;transform:scaleX(1.0934);-webkit-text-stroke:0.2px currentColor;">Format</span><span class="tx" id="t31" style="left:1197.74px;top:72.28px;font-size:9.2px;color:#262626;transform:scaleX(1.1067);-webkit-text-stroke:0.2px currentColor;">AutoSum</span><span class="tx" id="t32" style="left:1197.76px;top:91.78px;font-size:9.2px;color:#262626;transform:scaleX(1.0747);-webkit-text-stroke:0.2px currentColor;">Fill</span><span class="tx" id="t33" style="left:1197.74px;top:112.78px;font-size:9.2px;color:#262626;transform:scaleX(1.1028);-webkit-text-stroke:0.2px currentColor;">Clear</span><span class="tx" id="t34" style="left:1262.23px;top:103.58px;font-size:9.2px;color:#262626;transform:scaleX(1.1252);-webkit-text-stroke:0.2px currentColor;">Sort &amp;</span><span class="tx" id="t35" style="left:1264.82px;top:113.78px;font-size:9.2px;color:#262626;transform:scaleX(1.1521);-webkit-text-stroke:0.2px currentColor;">Filter</span><span class="tx" id="t36" style="left:1307.15px;top:103.58px;font-size:9.2px;color:#262626;transform:scaleX(1.0853);-webkit-text-stroke:0.2px currentColor;">Find &amp;</span><span class="tx" id="t37" style="left:1307.13px;top:113.78px;font-size:9.2px;color:#262626;transform:scaleX(1.1284);-webkit-text-stroke:0.2px currentColor;">Select</span><span class="tx" id="t38" style="left:1365.24px;top:103.08px;font-size:9.2px;color:#262626;transform:scaleX(1.1053);-webkit-text-stroke:0.2px currentColor;">Analyze</span><span class="tx" id="t39" style="left:1372.54px;top:114.38px;font-size:9.2px;color:#262626;transform:scaleX(1.1136);-webkit-text-stroke:0.2px currentColor;">Data</span><span class="tx" id="t40" style="left:9.10px;top:136.96px;font-size:11.22px;color:#1f1f1f;-webkit-text-stroke:0.2px currentColor;">D5</span><span class="tx" id="t41" style="left:171.50px;top:136.02px;font-size:12.33px;color:#1f1f1f;transform:scaleX(0.8963);-webkit-text-stroke:0.2px currentColor;">=IFERROR(VLOOKUP(A5, Source!$A$2:$D$100, 4, FALSE),"N/A")</span><span class="tx" id="t42" style="left:73.09px;top:923.00px;font-size:10.12px;color:#555555;transform:scaleX(1.1274);">Source</span><span class="tx" id="t43" style="left:143.21px;top:922.50px;font-size:10.12px;color:#41894b;font-weight:700;transform:scaleX(1.0847);">Destination</span><span class="tx" id="t44" style="left:22.41px;top:945.25px;font-size:10.3px;color:#5a5a5a;transform:scaleX(1.0659);">Ready</span><span class="tx" id="t45" style="left:88.77px;top:945.25px;font-size:10.3px;color:#5a5a5a;transform:scaleX(1.1373);">Accessibility: Good to go</span><span class="tx" id="t46" style="left:1483.48px;top:944.53px;font-size:10.67px;color:#5a5a5a;transform:scaleX(1.0768);">150%</span><span class="tx" id="t47" style="left:102.79px;top:164.75px;font-size:15px;color:#505050;-webkit-text-stroke:0.15px currentColor;">A</span><span class="tx" id="t48" style="left:245.19px;top:164.75px;font-size:15px;color:#505050;-webkit-text-stroke:0.15px currentColor;">B</span><span class="tx" id="t49" style="left:354.13px;top:164.75px;font-size:15px;color:#505050;-webkit-text-stroke:0.15px currentColor;">C</span><span class="tx" id="t50" style="left:498.48px;top:164.75px;font-size:15px;color:#3a8446;-webkit-text-stroke:0.15px currentColor;">D</span><span class="tx" id="t51" style="left:643.34px;top:164.75px;font-size:15px;color:#505050;-webkit-text-stroke:0.15px currentColor;">E</span><span class="tx" id="t52" style="left:733.36px;top:164.75px;font-size:15px;color:#505050;-webkit-text-stroke:0.15px currentColor;">F</span><span class="tx" id="t53" style="left:821.61px;top:164.75px;font-size:15px;color:#505050;-webkit-text-stroke:0.15px currentColor;">G</span><span class="tx" id="t54" style="left:911.53px;top:164.75px;font-size:15px;color:#505050;-webkit-text-stroke:0.15px currentColor;">H</span><span class="tx" id="t55" style="left:1004.36px;top:164.75px;font-size:15px;color:#505050;-webkit-text-stroke:0.15px currentColor;">I</span><span class="tx" id="t56" style="left:1092.30px;top:164.75px;font-size:15px;color:#505050;-webkit-text-stroke:0.15px currentColor;">J</span><span class="tx" id="t57" style="left:1180.74px;top:164.75px;font-size:15px;color:#505050;-webkit-text-stroke:0.15px currentColor;">K</span><span class="tx" id="t58" style="left:1271.28px;top:164.75px;font-size:15px;color:#505050;-webkit-text-stroke:0.15px currentColor;">L</span><span class="tx" id="t59" style="left:1358.90px;top:164.75px;font-size:15px;color:#505050;-webkit-text-stroke:0.15px currentColor;">M</span><span class="tx" id="t60" style="left:1449.43px;top:164.75px;font-size:15px;color:#505050;-webkit-text-stroke:0.15px currentColor;">N</span><span class="tx" id="t61" style="left:10.83px;top:190.95px;font-size:15px;color:#505050;-webkit-text-stroke:0.15px currentColor;">1</span><span class="tx" id="t62" style="left:10.83px;top:212.91px;font-size:15px;color:#505050;-webkit-text-stroke:0.15px currentColor;">2</span><span class="tx" id="t63" style="left:10.83px;top:234.87px;font-size:15px;color:#505050;-webkit-text-stroke:0.15px currentColor;">3</span><span class="tx" id="t64" style="left:10.83px;top:256.83px;font-size:15px;color:#505050;-webkit-text-stroke:0.15px currentColor;">4</span><span class="tx" id="t65" style="left:10.83px;top:278.79px;font-size:15px;color:#3a8446;-webkit-text-stroke:0.15px currentColor;">5</span><span class="tx" id="t66" style="left:10.83px;top:300.75px;font-size:15px;color:#505050;-webkit-text-stroke:0.15px currentColor;">6</span><span class="tx" id="t67" style="left:10.83px;top:322.71px;font-size:15px;color:#505050;-webkit-text-stroke:0.15px currentColor;">7</span><span class="tx" id="t68" style="left:10.83px;top:344.67px;font-size:15px;color:#505050;-webkit-text-stroke:0.15px currentColor;">8</span><span class="tx" id="t69" style="left:10.83px;top:366.63px;font-size:15px;color:#505050;-webkit-text-stroke:0.15px currentColor;">9</span><span class="tx" id="t70" style="left:6.66px;top:388.59px;font-size:15px;color:#505050;-webkit-text-stroke:0.15px currentColor;">10</span><span class="tx" id="t71" style="left:7.21px;top:410.55px;font-size:15px;color:#505050;-webkit-text-stroke:0.15px currentColor;">11</span><span class="tx" id="t72" style="left:6.66px;top:432.51px;font-size:15px;color:#505050;-webkit-text-stroke:0.15px currentColor;">12</span><span class="tx" id="t73" style="left:6.66px;top:454.47px;font-size:15px;color:#505050;-webkit-text-stroke:0.15px currentColor;">13</span><span class="tx" id="t74" style="left:6.66px;top:476.43px;font-size:15px;color:#505050;-webkit-text-stroke:0.15px currentColor;">14</span><span class="tx" id="t75" style="left:6.66px;top:498.39px;font-size:15px;color:#505050;-webkit-text-stroke:0.15px currentColor;">15</span><span class="tx" id="t76" style="left:6.66px;top:520.35px;font-size:15px;color:#505050;-webkit-text-stroke:0.15px currentColor;">16</span><span class="tx" id="t77" style="left:6.66px;top:542.31px;font-size:15px;color:#505050;-webkit-text-stroke:0.15px currentColor;">17</span><span class="tx" id="t78" style="left:6.66px;top:564.27px;font-size:15px;color:#505050;-webkit-text-stroke:0.15px currentColor;">18</span><span class="tx" id="t79" style="left:6.66px;top:586.23px;font-size:15px;color:#505050;-webkit-text-stroke:0.15px currentColor;">19</span><span class="tx" id="t80" style="left:6.66px;top:608.19px;font-size:15px;color:#505050;-webkit-text-stroke:0.15px currentColor;">20</span><span class="tx" id="t81" style="left:6.66px;top:630.15px;font-size:15px;color:#505050;-webkit-text-stroke:0.15px currentColor;">21</span><span class="tx" id="t82" style="left:6.66px;top:652.11px;font-size:15px;color:#505050;-webkit-text-stroke:0.15px currentColor;">22</span><span class="tx" id="t83" style="left:6.66px;top:674.07px;font-size:15px;color:#505050;-webkit-text-stroke:0.15px currentColor;">23</span><span class="tx" id="t84" style="left:6.66px;top:696.03px;font-size:15px;color:#505050;-webkit-text-stroke:0.15px currentColor;">24</span><span class="tx" id="t85" style="left:6.66px;top:717.99px;font-size:15px;color:#505050;-webkit-text-stroke:0.15px currentColor;">25</span><span class="tx" id="t86" style="left:6.66px;top:739.95px;font-size:15px;color:#505050;-webkit-text-stroke:0.15px currentColor;">26</span><span class="tx" id="t87" style="left:6.66px;top:761.91px;font-size:15px;color:#505050;-webkit-text-stroke:0.15px currentColor;">27</span><span class="tx" id="t88" style="left:6.66px;top:783.87px;font-size:15px;color:#505050;-webkit-text-stroke:0.15px currentColor;">28</span><span class="tx" id="t89" style="left:6.66px;top:805.83px;font-size:15px;color:#505050;-webkit-text-stroke:0.15px currentColor;">29</span><span class="tx" id="t90" style="left:6.66px;top:827.79px;font-size:15px;color:#505050;-webkit-text-stroke:0.15px currentColor;">30</span><span class="tx" id="t91" style="left:6.66px;top:849.75px;font-size:15px;color:#505050;-webkit-text-stroke:0.15px currentColor;">31</span><span class="tx" id="t92" style="left:6.66px;top:871.71px;font-size:15px;color:#505050;-webkit-text-stroke:0.15px currentColor;">32</span><span class="tx" id="t93" style="left:6.66px;top:893.67px;font-size:15px;color:#505050;-webkit-text-stroke:0.15px currentColor;">33</span><span class="tx" id="t94" style="left:33.67px;top:191.05px;font-size:15px;color:#000;font-weight:700;transform:scaleX(0.8650);-webkit-text-stroke:0.1px #000;">HOME ADDRESS</span><span class="tx" id="t95" style="left:189.01px;top:191.05px;font-size:15px;color:#000;font-weight:700;transform:scaleX(0.8764);-webkit-text-stroke:0.1px #000;">PHONE</span><span class="tx" id="t96" style="left:318.17px;top:191.05px;font-size:15px;color:#000;font-weight:700;transform:scaleX(0.9274);-webkit-text-stroke:0.1px #000;">Car Model</span><span class="tx" id="t97" style="left:408.10px;top:191.05px;font-size:15px;color:#000;font-weight:700;transform:scaleX(0.8929);-webkit-text-stroke:0.1px #000;">LOAN AMOUNT</span><span class="tx" id="t98" style="left:33.63px;top:213.01px;font-size:15px;color:#000;transform:scaleX(0.9144);-webkit-text-stroke:0.25px #000;">0768 Raven Place</span><span class="tx" id="t99" style="left:188.94px;top:213.01px;font-size:15px;color:#000;transform:scaleX(0.9779);-webkit-text-stroke:0.25px #000;">86(380)573-9933</span><span class="tx" id="t100" style="left:318.19px;top:213.01px;font-size:15px;color:#000;transform:scaleX(0.9073);-webkit-text-stroke:0.25px #000;">RAV4</span><span class="tx" id="t101" style="left:531.02px;top:213.01px;font-size:15px;color:#000;transform:scaleX(0.9922);-webkit-text-stroke:0.25px #000;">4,000.00 €</span><span class="tx" id="t102" style="left:33.62px;top:234.97px;font-size:15px;color:#000;transform:scaleX(0.9265);-webkit-text-stroke:0.25px #000;">1975 Badeau Crossing</span><span class="tx" id="t103" style="left:188.94px;top:234.97px;font-size:15px;color:#000;transform:scaleX(0.9779);-webkit-text-stroke:0.25px #000;">54(209)385-5325</span><span class="tx" id="t104" style="left:318.18px;top:234.97px;font-size:15px;color:#000;transform:scaleX(0.9149);-webkit-text-stroke:0.25px #000;">Yaris</span><span class="tx" id="t105" style="left:531.02px;top:234.97px;font-size:15px;color:#000;transform:scaleX(0.9922);-webkit-text-stroke:0.25px #000;">4,500.00 €</span><span class="tx" id="t106" style="left:33.60px;top:256.93px;font-size:15px;color:#000;transform:scaleX(0.9593);-webkit-text-stroke:0.25px #000;">0918 Bonner Court</span><span class="tx" id="t107" style="left:188.94px;top:256.93px;font-size:15px;color:#000;transform:scaleX(0.9779);-webkit-text-stroke:0.25px #000;">86(530)264-1959</span><span class="tx" id="t108" style="left:318.16px;top:256.93px;font-size:15px;color:#000;transform:scaleX(0.9506);-webkit-text-stroke:0.25px #000;">Gran Sport</span><span class="tx" id="t109" style="left:531.02px;top:256.93px;font-size:15px;color:#000;transform:scaleX(0.9922);-webkit-text-stroke:0.25px #000;">6,799.00 €</span><span class="tx" id="t110" style="left:33.60px;top:278.89px;font-size:15px;color:#000;transform:scaleX(0.9655);-webkit-text-stroke:0.25px #000;">5482 Westridge Drive</span><span class="tx" id="t111" style="left:188.94px;top:278.89px;font-size:15px;color:#000;transform:scaleX(0.9807);-webkit-text-stroke:0.25px #000;">370(647)892-9847</span><span class="tx" id="t112" style="left:318.19px;top:278.89px;font-size:15px;color:#000;transform:scaleX(0.8964);-webkit-text-stroke:0.25px #000;">Eclipse</span><span class="tx" id="t113" style="left:407.97px;top:278.89px;font-size:15px;color:#000;transform:scaleX(1.0813);-webkit-text-stroke:0.25px #000;">N/A</span><span class="tx" id="t114" style="left:33.63px;top:300.85px;font-size:15px;color:#000;transform:scaleX(0.9217);-webkit-text-stroke:0.25px #000;">6 Becker Center</span><span class="tx" id="t115" style="left:188.94px;top:300.85px;font-size:15px;color:#000;transform:scaleX(0.9779);-webkit-text-stroke:0.25px #000;">30(869)576-7479</span><span class="tx" id="t116" style="left:318.29px;top:300.85px;font-size:15px;color:#000;transform:scaleX(0.7486);-webkit-text-stroke:0.25px #000;">STS</span><span class="tx" id="t117" style="left:531.02px;top:300.85px;font-size:15px;color:#000;transform:scaleX(0.9922);-webkit-text-stroke:0.25px #000;">7,000.00 €</span><span class="tx" id="t118" style="left:33.62px;top:322.81px;font-size:15px;color:#000;transform:scaleX(0.9291);-webkit-text-stroke:0.25px #000;">3181 Russell Park</span><span class="tx" id="t119" style="left:188.94px;top:322.81px;font-size:15px;color:#000;transform:scaleX(0.9779);-webkit-text-stroke:0.25px #000;">55(410)217-7494</span><span class="tx" id="t120" style="left:318.22px;top:322.81px;font-size:15px;color:#000;transform:scaleX(0.8561);-webkit-text-stroke:0.25px #000;">E-Series</span><span class="tx" id="t121" style="left:531.02px;top:322.81px;font-size:15px;color:#000;transform:scaleX(0.9922);-webkit-text-stroke:0.25px #000;">4,500.00 €</span><span class="tx" id="t122" style="left:33.60px;top:344.77px;font-size:15px;color:#000;transform:scaleX(0.9561);-webkit-text-stroke:0.25px #000;">064 American Junction</span><span class="tx" id="t123" style="left:188.94px;top:344.77px;font-size:15px;color:#000;transform:scaleX(0.9807);-webkit-text-stroke:0.25px #000;">254(953)138-9453</span><span class="tx" id="t124" style="left:318.15px;top:344.77px;font-size:15px;color:#000;transform:scaleX(0.9583);-webkit-text-stroke:0.25px #000;">Mazda5</span><span class="tx" id="t125" style="left:531.02px;top:344.77px;font-size:15px;color:#000;transform:scaleX(0.9922);-webkit-text-stroke:0.25px #000;">1,200.00 €</span></body></html>
